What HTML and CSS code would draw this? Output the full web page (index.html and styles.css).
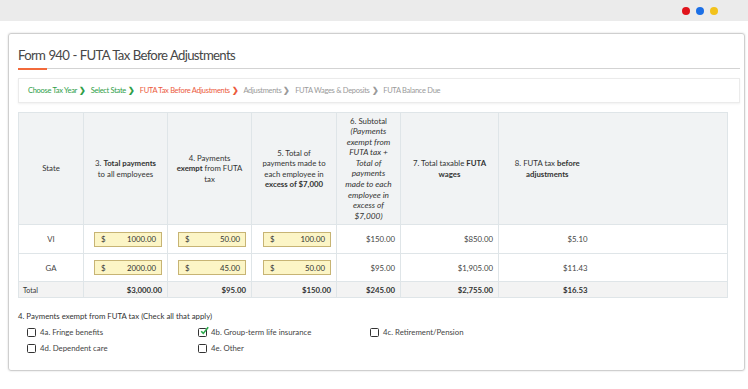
FILE: index.html
```html
<!DOCTYPE html>
<html>
<head>
<meta charset="utf-8">
<link rel="stylesheet" href="styles.css">
</head>
<body>
<div class="topbar">
  <span class="dot red"></span><span class="dot blue"></span><span class="dot yellow"></span>
</div>
<div class="card">
  <h1 class="title">Form 940 - FUTA Tax Before Adjustments</h1>
  <div class="title-rule"><span class="accent"></span></div>
  <div class="crumbs">
    <span class="done">Choose Tax Year</span><span class="chev done">&#x276F;</span>
    <span class="done">Select State</span><span class="chev done">&#x276F;</span>
    <span class="current">FUTA Tax Before Adjustments</span><span class="chev current">&#x276F;</span>
    <span class="todo">Adjustments</span><span class="chev todo">&#x276F;</span>
    <span class="todo">FUTA Wages &amp; Deposits</span><span class="chev todo">&#x276F;</span>
    <span class="todo">FUTA Balance Due</span>
  </div>
  <table class="grid">
    <colgroup>
      <col class="c1"><col class="c2"><col class="c3"><col class="c4"><col class="c5"><col class="c6"><col class="c7"><col class="c8">
    </colgroup>
    <thead>
      <tr>
        <th>State</th>
        <th>3. <b>Total payments</b><br>to all employees</th>
        <th>4. Payments<br><b>exempt</b> from FUTA<br>tax</th>
        <th>5. Total of<br>payments made to<br>each employee in<br><b>excess of $7,000</b></th>
        <th>6. Subtotal<br><i>(Payments<br>exempt from<br>FUTA tax +<br>Total of<br>payments<br>made to each<br>employee in<br>excess of<br>$7,000)</i></th>
        <th>7. Total taxable <b>FUTA</b><br><b>wages</b></th>
        <th class="last">8. FUTA tax <b>before</b><br><b>adjustments</b></th>
        <th class="filler"></th>
      </tr>
    </thead>
    <tbody>
      <tr class="r1">
        <td class="st">VI</td>
        <td class="in"><span class="field"><span>$</span><span>1000.00</span></span></td>
        <td class="in"><span class="field"><span>$</span><span>50.00</span></span></td>
        <td class="in"><span class="field"><span>$</span><span>100.00</span></span></td>
        <td class="num">$150.00</td>
        <td class="num">$850.00</td>
        <td class="num last">$5.10</td>
        <td class="filler"></td>
      </tr>
      <tr class="r2">
        <td class="st">GA</td>
        <td class="in"><span class="field"><span>$</span><span>2000.00</span></span></td>
        <td class="in"><span class="field"><span>$</span><span>45.00</span></span></td>
        <td class="in"><span class="field"><span>$</span><span>50.00</span></span></td>
        <td class="num">$95.00</td>
        <td class="num">$1,905.00</td>
        <td class="num last">$11.43</td>
        <td class="filler"></td>
      </tr>
      <tr class="total">
        <td class="lbl">Total</td>
        <td class="num">$3,000.00</td>
        <td class="num">$95.00</td>
        <td class="num">$150.00</td>
        <td class="num">$245.00</td>
        <td class="num">$2,755.00</td>
        <td class="num last">$16.53</td>
        <td class="filler"></td>
      </tr>
    </tbody>
  </table>
  <div class="exempt">
    <div class="exempt-label">4. Payments exempt from FUTA tax (Check all that apply)</div>
    <div class="checks">
      <label class="check"><span class="box"></span>4a. Fringe benefits</label>
      <label class="check"><span class="box checked"><svg viewBox="0 0 10 10" width="10" height="10"><path d="M2.2 5.2 L4.3 7.4 L9.2 1.2" fill="none" stroke="#2aa84a" stroke-width="1.6"/></svg></span>4b. Group-term life insurance</label>
      <label class="check"><span class="box"></span>4c. Retirement/Pension</label>
      <label class="check"><span class="box"></span>4d. Dependent care</label>
      <label class="check"><span class="box"></span>4e. Other</label>
    </div>
  </div>
</div>
</body>
</html>
```
FILE: styles.css
```css
html, body {
  margin: 0;
  padding: 0;
  background: #fff;
}
body {
  font-family: Lato, "Open Sans", sans-serif;
  color: #333;
  width: 748px;
  height: 389px;
  overflow: hidden;
}
.topbar {
  height: 21px;
  background: #ebebeb;
  display: flex;
  justify-content: flex-end;
  align-items: center;
  gap: 6px;
  padding-right: 30px;
}
.dot {
  width: 8px;
  height: 8px;
  border-radius: 50%;
  display: block;
}
.red { background: #e0141c; }
.blue { background: #1b6fe6; }
.yellow { background: #f2c21b; }

.card {
  margin: 12px 3px 0 8px;
  height: 338px;
  border: 1px solid #cfcfcf;
  border-radius: 3px;
  box-shadow: 0 0 2px rgba(0,0,0,0.18);
  padding: 0 4px 0 9px;
  box-sizing: border-box;
}
.title {
  margin: 13px 0 0 0;
  font-size: 13.2px;
  font-weight: 400;
  letter-spacing: -0.7px;
  word-spacing: 0.5px;
  color: #474747;
  line-height: 17px;
}
.title-rule {
  margin-top: 4px;
  height: 1px;
  background: #d3d3d3;
  display: flex;
  align-items: center;
}
.accent {
  width: 29px;
  height: 2px;
  background: #f26a3b;
}
.crumbs {
  margin-top: 9px;
  height: 25px;
  border: 1px solid #ebebeb;
  box-shadow: 0 1px 2px rgba(0,0,0,0.06);
  display: flex;
  align-items: center;
  padding-left: 9px;
  font-size: 7.5px;
  letter-spacing: -0.3px;
  box-sizing: border-box;
}
.crumbs .chev {
  font-size: 7.5px;
  margin: 0 5px 0 2px;
  font-weight: 700;
}
.done { color: #2f9e48; }
.current { color: #ec5a3c; }
.todo { color: #9a9a9a; }

.grid {
  margin-top: 9px;
  border-collapse: collapse;
  table-layout: fixed;
  width: 709px;
  font-size: 7.8px;
}
.c1 { width: 65px; }
.c2 { width: 84px; }
.c3 { width: 84px; }
.c4 { width: 85px; }
.c5 { width: 64px; }
.c6 { width: 98px; }
.c7 { width: 97px; }
.c8 { width: 132px; }

.grid th {
  background: #f1f3f4;
  font-weight: 400;
  line-height: 10.5px;
  height: 111px;
  padding: 0 3px;
  border: 1px solid #dfe5e8;
  vertical-align: middle;
  color: #333;
}
.grid th b { font-weight: 700; }
.grid th i { font-size: 8.3px; line-height: 9.6px; }
.grid .last { border-right: none; }
.grid .filler { border-left: none; }
.grid td {
  border: 1px solid #dfe5e8;
  padding: 0 5px;
  color: #444;
}
.grid td.last { padding-right: 8px; }
.r1 td { height: 28px; }
.r2 td { height: 27px; }
.total td {
  height: 15px;
  background: #f3f3f3;
  font-weight: 700;
  color: #333;
}
.total td.lbl {
  font-weight: 400;
  font-size: 7px;
  padding-left: 4px;
}
.st { text-align: center; }
.num { text-align: right; }
.in { text-align: right; }
.field {
  display: inline-flex;
  justify-content: space-between;
  align-items: center;
  width: 68px;
  height: 15px;
  box-sizing: border-box;
  background: #fcf5c6;
  border: 1px solid #c7b474;
  padding: 0 5px 0 6px;
  vertical-align: middle;
  color: #333;
}

.exempt {
  padding-left: 0;
  margin-top: 13px;
  font-size: 7.8px;
  color: #333;
}
.exempt-label {
  line-height: 10px;
}
.checks {
  margin-top: 6px;
  display: grid;
  grid-template-columns: 171px 172px 160px;
  row-gap: 6px;
  padding-left: 9px;
}
.check {
  display: flex;
  align-items: center;
  line-height: 10px;
  color: #444;
}
.box {
  width: 7px;
  height: 7px;
  border: 1.2px solid #333;
  border-radius: 1.5px;
  margin-right: 4px;
  position: relative;
  flex: none;
}
.box svg {
  position: absolute;
  left: 0;
  top: -3px;
}
```
